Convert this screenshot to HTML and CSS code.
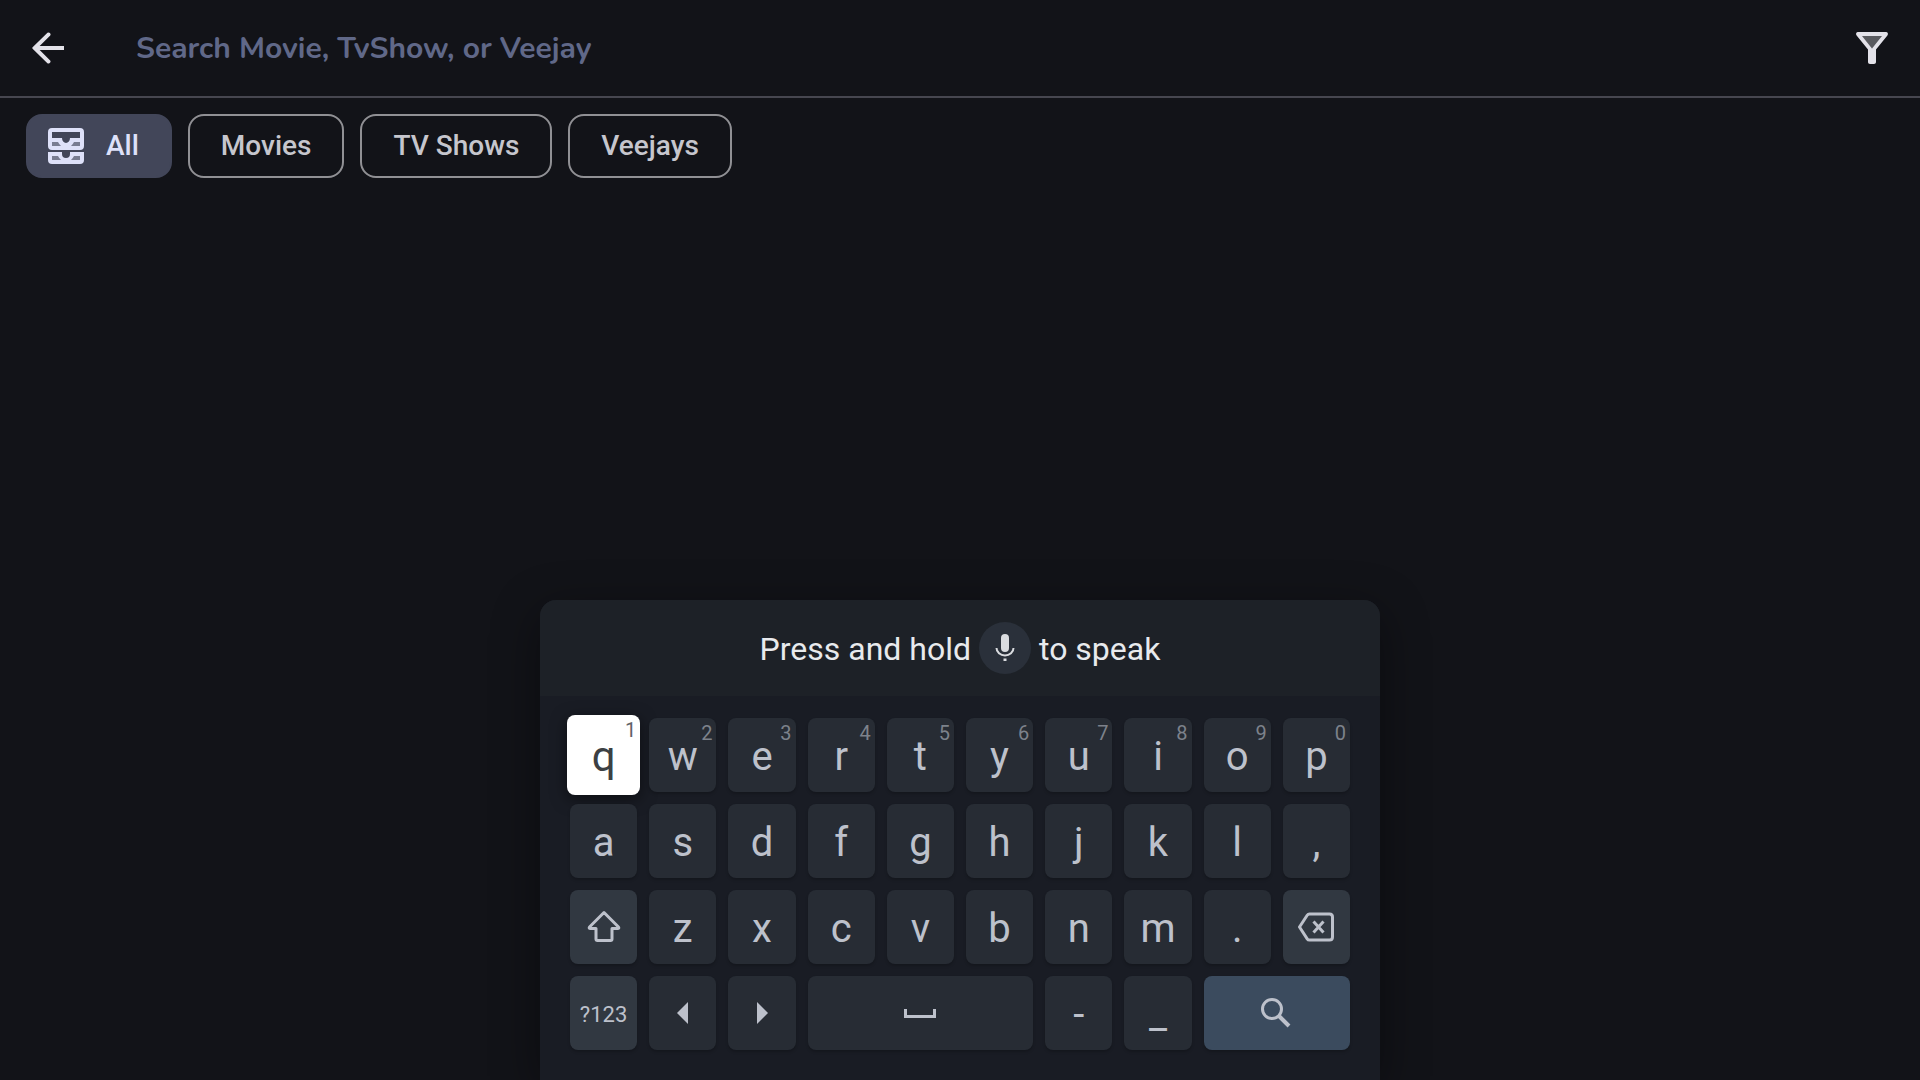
FILE: index.html
```html
<!DOCTYPE html>
<html lang="en">
<head>
  <meta charset="utf-8">
  <title>Search</title>
  <link rel="stylesheet" href="styles.css">
</head>
<body>

  <header class="topbar">
    <button class="icon-button" aria-label="Back">
      <svg viewBox="0 0 24 24"><path d="M20 11H7.83l5.3-5.3q.4-.5 0-.9l-.4-.4q-.5-.4-1 0L4.3 11.6q-.4.4 0 .8l7.4 7.2q.5.4 1 0l.4-.4q.4-.4 0-.9L7.83 13H20z"/></svg>
    </button>
    <input class="search" type="text" placeholder="Search Movie, TvShow, or Veejay" aria-label="Search">
    <button class="icon-button" aria-label="Filter">
      <svg viewBox="0 0 24 24">
        <path class="tone" d="M6 5.5h12l-6 7z"/>
        <path fill-rule="evenodd" d="M5 4h14c.9 0 1.3 1 .7 1.7L14 12.7V19c0 .6-.4 1-1 1h-2c-.6 0-1-.4-1-1v-6.3L4.3 5.7C3.700 5 4.100 4 5 4zM7 6l5 6.200L17 6z"/>
      </svg>
    </button>
  </header>

  <nav class="chips">
    <button class="chip selected">
      <svg viewBox="0 0 36 36">
        <path class="tone" d="M4 14h9v4H4zM23 14h9v4h-9zM4 28h9v4H4zM23 28h9v4h-9z"/>
        <path fill-rule="evenodd" d="M4 0h28a4 4 0 0 1 4 4v14a4 4 0 0 1-4 4H4a4 4 0 0 1-4-4V4a4 4 0 0 1 4-4zM4 4v6h10a4 5 0 0 0 8 0h10V4zM4 14v4h9q-2-2-3-4zM32 14v4h-9q2-2 3-4z"/>
        <path fill-rule="evenodd" d="M0 24h14v2a4 4 0 0 0 8 0v-2h14v8a4 4 0 0 1-4 4H4a4 4 0 0 1-4-4zM4 28v4h9q-2-2-3-4zM32 28v4h-9q2-2 3-4z"/>
      </svg>
      All
    </button>
    <button class="chip">Movies</button>
    <button class="chip">TV Shows</button>
    <button class="chip">Veejays</button>
  </nav>

  <section class="keyboard" aria-label="Keyboard">
    <div class="voice">
      <span>Press and hold</span>
      <button class="mic" aria-label="Microphone">
        <svg viewBox="0 0 28 28">
          <rect x="10" y="0" width="8" height="18" rx="4"/>
          <path class="line thin" d="M5.500 14a8.500 7.500 0 0 0 17 0"/>
          <path d="M12.500 24.500h3v2.500h-3z"/>
        </svg>
      </button>
      <span>to speak</span>
    </div>
    <div class="keys">
      <button class="key focused">q<span class="hint">1</span></button>
      <button class="key">w<span class="hint">2</span></button>
      <button class="key">e<span class="hint">3</span></button>
      <button class="key">r<span class="hint">4</span></button>
      <button class="key">t<span class="hint">5</span></button>
      <button class="key">y<span class="hint">6</span></button>
      <button class="key">u<span class="hint">7</span></button>
      <button class="key">i<span class="hint">8</span></button>
      <button class="key">o<span class="hint">9</span></button>
      <button class="key">p<span class="hint">0</span></button>

      <button class="key">a</button>
      <button class="key">s</button>
      <button class="key">d</button>
      <button class="key">f</button>
      <button class="key">g</button>
      <button class="key">h</button>
      <button class="key">j</button>
      <button class="key">k</button>
      <button class="key">l</button>
      <button class="key">,</button>

      <button class="key special" aria-label="Shift">
        <svg viewBox="0 0 36 36"><path class="line" d="M18 3.500L3.500 18q-1 1.500 1 1.500H10V30q0 1.500 1.500 1.500h13q1.500 0 1.500-1.500V19.500h5.500q2 0 1-1.500z"/></svg>
      </button>
      <button class="key">z</button>
      <button class="key">x</button>
      <button class="key">c</button>
      <button class="key">v</button>
      <button class="key">b</button>
      <button class="key">n</button>
      <button class="key">m</button>
      <button class="key">.</button>
      <button class="key special" aria-label="Backspace">
        <svg viewBox="0 0 36 36"><path class="line" d="M11.500 5H31.500q3 0 3 3v20q0 3-3 3h-20q-1.500 0-2.300-1.200L1.500 18l7.700-11.800Q10 5 11.500 5zM15.500 12.500l10 11M25.500 12.500l-10 11"/></svg>
      </button>

      <button class="key special symbols">?123</button>
      <button class="key" aria-label="Move left">
        <svg viewBox="0 0 36 36"><path d="M23 7v22L12 18z"/></svg>
      </button>
      <button class="key" aria-label="Move right">
        <svg viewBox="0 0 36 36"><path d="M13 7v22l11-11z"/></svg>
      </button>
      <button class="key space" aria-label="Space">
        <svg viewBox="0 0 36 36"><path d="M2 14h3v6h26v-6h3v9H2z"/></svg>
      </button>
      <button class="key">-</button>
      <button class="key">_</button>
      <button class="key enter" aria-label="Search">
        <svg viewBox="0 0 36 36"><circle class="line" cx="13" cy="14" r="9.500"/><path class="line thick" d="M20 21l10 10"/></svg>
      </button>
    </div>
  </section>

</body>
</html>
```
FILE: styles.css
```css
* {
  box-sizing: border-box;
}

body {
  margin: 0;
  min-height: 100vh;
  display: flex;
  flex-direction: column;
  overflow: hidden;
  background-color: #121318;
  font-family: Roboto, sans-serif;
}

button {
  padding: 0;
  border: none;
  background: none;
  color: inherit;
  font-family: inherit;
  cursor: pointer;
}

svg {
  display: block;
  fill: currentColor;
}

.tone {
  opacity: 0.35;
}

.line {
  fill: none;
  stroke: currentColor;
  stroke-width: 3;
  stroke-linejoin: round;
}

.thin {
  stroke-width: 2;
}

.thick {
  stroke-width: 4;
}

/* top bar */
.topbar {
  display: flex;
  align-items: center;
  padding: 24px;
  border-bottom: 2px solid #46464f;
  color: #e3e2e9;
}

.icon-button svg {
  width: 48px;
  height: 48px;
}

.search {
  flex: 1;
  height: 48px;
  margin: 0 64px;
  padding: 0;
  border: none;
  outline: none;
  background: none;
  color: #e3e2e9;
  font-family: Nunito, "Open Sans", sans-serif;
  font-size: 30px;
  font-weight: 700;
}

.search::placeholder {
  color: #606888;
  opacity: 1;
}

/* category chips */
.chips {
  display: flex;
  gap: 16px;
  padding: 16px 26px;
}

.chip {
  display: flex;
  align-items: center;
  gap: 22px;
  height: 64px;
  padding: 0 31px 2px;
  border: 2px solid #909094;
  border-radius: 16px;
  color: #c6c6cd;
  font-size: 28px;
  font-weight: 500;
}

.chip.selected {
  padding-left: 20px;
  border-color: #424659;
  background-color: #424659;
  color: #dee1f9;
}

.chip svg {
  width: 36px;
  height: 36px;
  margin-top: 2px;
}

/* keyboard */
.keyboard {
  width: 100%;
  max-width: 840px;
  margin: auto auto 0;
  border-radius: 16px 16px 0 0;
  background-color: #191c24;
  box-shadow: 0 12px 48px rgba(0, 0, 0, 0.4);
}

.voice {
  display: flex;
  justify-content: center;
  align-items: center;
  gap: 8px;
  height: 96px;
  border-radius: 16px 16px 0 0;
  background-color: #1d2127;
  color: #e8eaed;
  font-size: 32px;
}

.voice span {
  padding-top: 2px;
}

.mic {
  display: flex;
  justify-content: center;
  align-items: center;
  width: 52px;
  height: 52px;
  border-radius: 50%;
  background-color: #2a303a;
  color: #dadce0;
}

.mic svg {
  width: 28px;
  height: 28px;
}

.keys {
  display: grid;
  grid-template-columns: repeat(10, 1fr);
  grid-auto-rows: 74px;
  gap: 12px;
  padding: 22px 30px 30px;
}

.key {
  position: relative;
  display: flex;
  justify-content: center;
  align-items: center;
  padding-top: 2px;
  border-radius: 8px;
  background-color: #272c34;
  box-shadow: 0 2px 3px rgba(0, 0, 0, 0.2);
  color: #bdc1cb;
  font-size: 40px;
}

.key svg {
  width: 36px;
  height: 36px;
  margin-bottom: 2px;
}

.hint {
  position: absolute;
  top: 3px;
  right: 4px;
  color: #7d828b;
  font-size: 20px;
}

.special {
  background-color: #313841;
}

.symbols {
  font-size: 22px;
}

.space {
  grid-column: span 3;
}

.enter {
  grid-column: span 2;
  background-color: #3b4b5e;
}

/* the focused key grows past its cell */
.focused {
  margin: -3px;
  background-color: #fff;
  box-shadow: 0 4px 16px rgba(0, 0, 0, 0.5);
  color: #3c4043;
  font-size: 42px;
}

.focused .hint {
  color: #5f6368;
}
```
